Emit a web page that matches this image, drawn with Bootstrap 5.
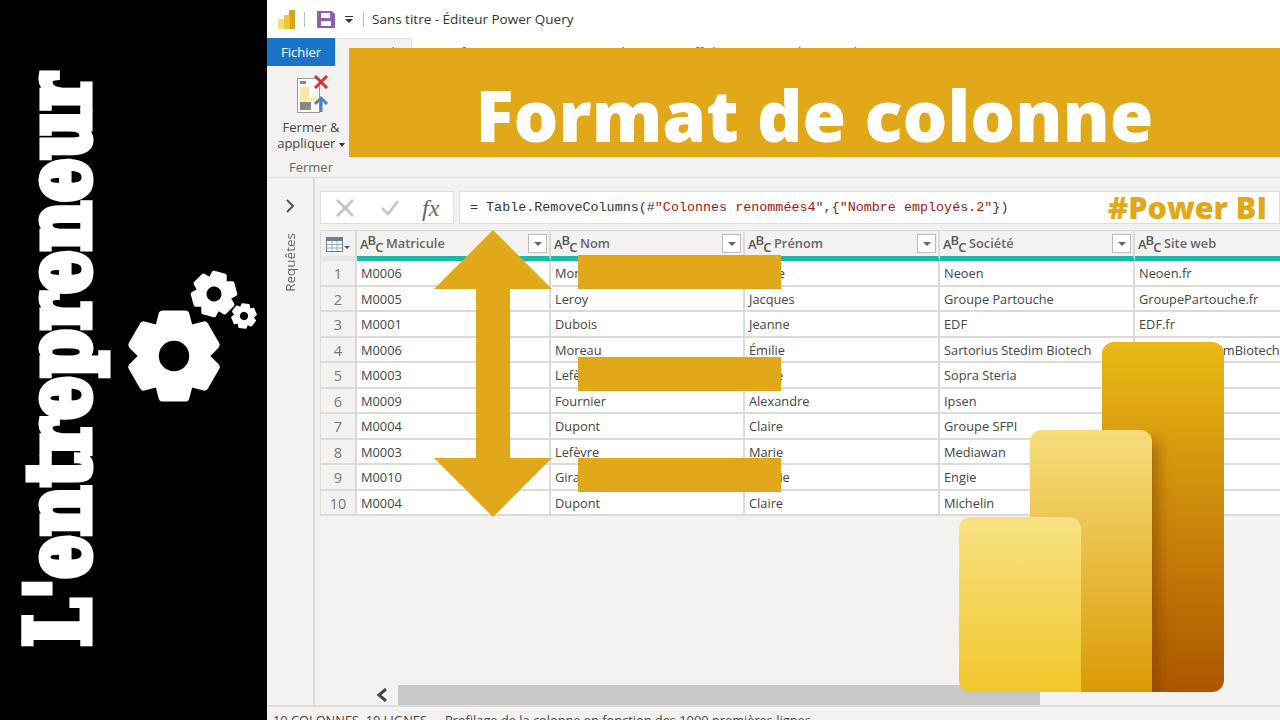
<!DOCTYPE html>
<html lang="fr">
<head>
<meta charset="UTF-8">
<title>Format de colonne</title>
<link href="https://cdn.jsdelivr.net/npm/bootstrap@5.3.0/dist/css/bootstrap.min.css" rel="stylesheet">
<style>
html, body { height: 720px; overflow: hidden; }
body { font-family: "Open Sans", "Noto Sans", sans-serif; color: #444; background: #000; position: relative; }
.brand-side { width: 267px; height: 720px; background: #000; flex: none; overflow: hidden; }
.brand-name { writing-mode: vertical-rl; transform: rotate(180deg) scaleY(.853); font-family: "DejaVu Serif Condensed", "DejaVu Serif", serif; font-weight: 700; font-size: 88px; line-height: 88px; color: #fff; -webkit-text-stroke: 7px #fff; width: 88px; flex: none; margin: -30px 0 0 14px; height: 780px; text-align: center; white-space: nowrap; }
.brand-gears { width: 135px; height: 145px; margin-left: 25px; margin-top: 263px; flex: none; }
.pq-app { width: 1013px; height: 720px; background: #f3f2f1; overflow: hidden; }
.pq-title { height: 38px; background: #fff; font-size: 13.5px; color: #333; flex: none; }
.pq-logo { margin: 0 8px 0 11px; }
.pq-sep { width: 1px; height: 15px; background: #bbb; }
.pq-qat { margin: 0 10px; }
.pq-tabs { height: 28px; background: #fff; font-size: 13px; color: #555; flex: none; }
.pq-file { width: 68px; background: #1b74c5; color: #fff; padding-top: 2px; }
.pq-tab-on { width: 77px; background: #f3f2f1; border: 1px solid #ddd; border-bottom: 0; }
.pq-tab { padding: 0 15px; line-height: 28px; }
.pq-ribbon { height: 112px; border-bottom: 1px solid #ddd; font-size: 13px; line-height: 16px; color: #444; flex: none; }
.pq-close { width: 88px; }
.pq-close svg { margin-left: 6px; }
.pq-close-label { margin-top: 5px; }
.pq-group { color: #666; margin-top: 8px; }
.pq-caret { display: inline-block; border: 3.5px solid transparent; border-top: 4px solid #333; border-bottom: 0; vertical-align: middle; }
.pq-panel { width: 48px; flex: none; border-right: 2px solid #dcdbda; color: #666; padding-top: 21px; }
.pq-vert { writing-mode: vertical-rl; transform: rotate(180deg); font-size: 13.5px; margin-top: 20px; }
.pq-body { min-width: 0; padding: 13px 0 0 5px; }
.pq-formula-row { gap: 5px; }
.pq-box { height: 33px; background: #fff; border: 1px solid #dedddc; }
.pq-btns { width: 134px; flex: none; padding-left: 15px; }
.pq-btns svg:first-child { margin-right: 27px; }
.pq-btns svg:nth-child(2) { margin-right: 23px; }
.pq-fx { font-family: "Liberation Serif", serif; font-style: italic; font-size: 24px; line-height: 1; color: #666; }
.pq-formula { font-size: 13.4px; color: #333; white-space: nowrap; padding-left: 10px; }
.pq-code { font-family: "Liberation Mono", monospace; padding-top: 2px; }
.pq-str { color: #a31515; }
.pq-hash { font-weight: 800; font-size: 30.5px; color: #e1a91a; line-height: 1; margin-right: 12px; }
.pq-grid { table-layout: fixed; width: 1011px; margin: 6px 0 0; border-collapse: separate; border-spacing: 0; font-size: 12.8px; }
.pq-grid th, .pq-grid td { padding: 2px 4px 0; line-height: 1.2; border: 0 solid #dcdbda; border-width: 0 2px 2px 0; color: #444; vertical-align: middle; white-space: nowrap; overflow: hidden; box-shadow: none; }
.pq-grid th { height: 31px; background: #f3f2f1; border-top-width: 1px; border-bottom: 5px solid #1ab8a6; color: #666; font-weight: 600; padding: 0 2px 0 3px; }
.pq-grid th.pq-corner { border-bottom: 5px solid #e6e5e4; border-left-width: 1px; text-align: center; padding: 0; }
.pq-grid tbody tr:nth-child(odd) td { height: 26px; }
.pq-grid tbody tr:nth-child(even) td { height: 25px; }
.pq-grid td { background: #fff; }
.pq-grid td.pq-num { background: #f3f2f1; border-left-width: 1px; color: #777; font-size: 14.5px; text-align: center; padding: 2px 0 0; }
.pq-abc { font-size: 13px; font-weight: 600; color: #555; width: 22px; flex: none; letter-spacing: -1px; line-height: 1; }
.pq-up { vertical-align: 4px; }
.pq-down { vertical-align: -3px; }
.pq-head { padding-left: 4px; }
.pq-filter { width: 19px; height: 19px; background: #fff; border: 1px solid #bbb; flex: none; }
.pq-filter i { border: 4px solid transparent; border-top: 4px solid #666; border-bottom: 0; }
.pq-scroll { height: 20px; flex: none; }
.pq-back { width: 78px; padding-right: 10px; }
.pq-thumb { width: 642px; background: #c8c8c8; }
.pq-status { height: 15px; flex: none; border-top: 2px solid #dedddc; font-size: 12.8px; line-height: 18px; padding: 4px 0 0 6px; gap: 18px; color: #444; white-space: nowrap; }
.over-banner { left: 349px; top: 48px; width: 931px; height: 109px; padding-top: 26px; background: #e1a91a; color: #fff; font-weight: 800; font-size: 70.600px; line-height: 1; }
.over-art { left: 0; top: 0; width: 1280px; height: 720px; pointer-events: none; }
</style>
</head>
<body>
<div class="d-flex">
  <aside class="brand-side d-flex">
    <div class="brand-name">L'entrepreneur</div>
    <svg class="brand-gears" viewBox="0 0 135 145" aria-hidden="true">
      <defs>
        <g id="gear">
          <circle r="37" fill="#fff"/>
          <path id="tooth" fill="#fff" d="M-12-48h24q3 0 4 3l5 19h-42l5-19q1-3 4-3z"/>
          <use href="#tooth" transform="rotate(60)"/>
          <use href="#tooth" transform="rotate(120)"/>
          <use href="#tooth" transform="rotate(180)"/>
          <use href="#tooth" transform="rotate(240)"/>
          <use href="#tooth" transform="rotate(300)"/>
          <circle r="16" fill="#000"/>
        </g>
      </defs>
      <use href="#gear" transform="translate(47 93) scale(.95)"/>
      <use href="#gear" transform="translate(87 31) rotate(15) scale(.47)"/>
      <use href="#gear" transform="translate(117 53) rotate(8) scale(.26)"/>
    </svg>
  </aside>
  <main class="pq-app d-flex flex-column flex-grow-1">
    <div class="pq-title d-flex align-items-center">
      <svg class="pq-logo" width="18" height="19" viewBox="0 0 18 19" aria-hidden="true">
        <rect x="11" y="0" width="6" height="19" rx="1" fill="#d9a50f"/>
        <rect x="6" y="5" width="6" height="14" rx="1" fill="#ecc436"/>
        <rect x="0" y="9" width="6" height="10" rx="1" fill="#f5dc78"/>
      </svg>
      <span class="pq-sep me-1"></span>
      <svg width="18" height="17" viewBox="0 0 18 17" class="ms-2" aria-hidden="true">
        <path fill="#8e5db5" d="M0 0h15l3 3v14H0zM4 2v5h9V2zM4 10v5h10v-5z"/>
      </svg>
      <svg class="pq-qat" width="8" height="9" viewBox="0 0 8 9" aria-hidden="true"><path fill="#333" d="M0 1h8v1H0zM0 4h8L4 8z"/></svg>
      <span class="pq-sep me-2"></span>
      <span>Sans titre - Éditeur Power Query</span>
    </div>
    <div class="pq-tabs d-flex">
      <div class="pq-file d-flex align-items-center justify-content-center">Fichier</div>
      <div class="pq-tab-on d-flex align-items-center justify-content-center">Accueil</div>
      <div class="pq-tab">Transformer</div>
      <div class="pq-tab">Ajouter une colonne</div>
      <div class="pq-tab">Affichage</div>
      <div class="pq-tab">Outils</div>
      <div class="pq-tab">Aide</div>
    </div>
    <div class="pq-ribbon d-flex">
      <div class="pq-close d-flex flex-column align-items-center text-center pt-2">
        <svg width="34" height="40" viewBox="0 0 34 40" aria-hidden="true">
          <rect x=".5" y="4.500" width="22" height="34" fill="#fff" stroke="#999"/>
          <path fill="#fbe8a6" d="M3 13h9v12l8-4v6H3z"/>
          <rect x="3" y="7" width="6" height="3" fill="#888"/>
          <rect x="3" y="28" width="11" height="8" fill="#888"/>
          <path stroke="#d13438" stroke-width="3" fill="none" d="M18 2l12 12M30 2L18 14"/>
          <path stroke="#4f86b8" stroke-width="3" fill="none" d="M24 38V24M18 30l6-6 6 6"/>
        </svg>
        <div class="pq-close-label">Fermer &amp;<br>appliquer <i class="pq-caret"></i></div>
        <div class="pq-group">Fermer</div>
      </div>
    </div>
    <div class="d-flex flex-grow-1" style="min-height:0">
      <div class="pq-panel d-flex flex-column align-items-center">
        <svg width="10" height="14" viewBox="0 0 10 14" aria-hidden="true"><path d="M2 1l6 6-6 6" fill="none" stroke="#555" stroke-width="2"/></svg>
        <div class="pq-vert">Requêtes</div>
      </div>
      <div class="pq-body flex-grow-1 d-flex flex-column">
        <div class="d-flex pq-formula-row">
          <div class="pq-box pq-btns d-flex align-items-center">
            <svg width="18" height="18" viewBox="0 0 18 18" aria-hidden="true"><path d="M1 1l16 16M17 1L1 17" stroke="#c4c4c4" stroke-width="2.500"/></svg>
            <svg width="18" height="16" viewBox="0 0 18 16" aria-hidden="true"><path d="M1 8l6 6L17 1" fill="none" stroke="#c4c4c4" stroke-width="2.500"/></svg>
            <span class="pq-fx">fx</span>
          </div>
          <div class="pq-box pq-formula flex-grow-1 d-flex align-items-center justify-content-between">
            <span class="pq-code">= Table.RemoveColumns(#<span class="pq-str">"Colonnes renommées4"</span>,{<span class="pq-str">"Nombre employés.2"</span>})</span>
            <span class="pq-hash">#Power BI</span>
          </div>
        </div>
        <table class="table pq-grid">
          <colgroup><col style="width:37px"><col style="width:194px"><col style="width:194px"><col style="width:195px"><col style="width:195px"><col style="width:196px"></colgroup>
          <thead>
            <tr>
              <th class="pq-corner">
                <svg width="24" height="15" viewBox="0 0 24 15" aria-hidden="true"><rect x=".5" y=".5" width="16" height="14" fill="#fff" stroke="#6a7f96"/><path fill="#6a7f96" d="M0 0h17v4H0z"/><path stroke="#9aa9b8" d="M6 4v10M11 4v10M1 7.500h15M1 11h15"/><path fill="#555" d="M18 9h6l-3 3z"/></svg>
              </th>
              <th><div class="d-flex align-items-center"><span class="pq-abc">A<span class="pq-up">B</span><span class="pq-down">C</span></span><span class="flex-grow-1 pq-head">Matricule</span><span class="pq-filter d-flex align-items-center justify-content-center"><i></i></span></div></th>
              <th><div class="d-flex align-items-center"><span class="pq-abc">A<span class="pq-up">B</span><span class="pq-down">C</span></span><span class="flex-grow-1 pq-head">Nom</span><span class="pq-filter d-flex align-items-center justify-content-center"><i></i></span></div></th>
              <th><div class="d-flex align-items-center"><span class="pq-abc">A<span class="pq-up">B</span><span class="pq-down">C</span></span><span class="flex-grow-1 pq-head">Prénom</span><span class="pq-filter d-flex align-items-center justify-content-center"><i></i></span></div></th>
              <th><div class="d-flex align-items-center"><span class="pq-abc">A<span class="pq-up">B</span><span class="pq-down">C</span></span><span class="flex-grow-1 pq-head">Société</span><span class="pq-filter d-flex align-items-center justify-content-center"><i></i></span></div></th>
              <th><div class="d-flex align-items-center"><span class="pq-abc">A<span class="pq-up">B</span><span class="pq-down">C</span></span><span class="flex-grow-1 pq-head">Site web</span></div></th>
            </tr>
          </thead>
          <tbody>
            <tr><td class="pq-num">1</td><td>M0006</td><td>Moreau</td><td>Émilie</td><td>Neoen</td><td>Neoen.fr</td></tr>
            <tr><td class="pq-num">2</td><td>M0005</td><td>Leroy</td><td>Jacques</td><td>Groupe Partouche</td><td>GroupePartouche.fr</td></tr>
            <tr><td class="pq-num">3</td><td>M0001</td><td>Dubois</td><td>Jeanne</td><td>EDF</td><td>EDF.fr</td></tr>
            <tr><td class="pq-num">4</td><td>M0006</td><td>Moreau</td><td>Émilie</td><td>Sartorius Stedim Biotech</td><td>SartoriusStedimBiotech.fr</td></tr>
            <tr><td class="pq-num">5</td><td>M0003</td><td>Lefèvre</td><td>Marie</td><td>Sopra Steria</td><td>SopraSteria.fr</td></tr>
            <tr><td class="pq-num">6</td><td>M0009</td><td>Fournier</td><td>Alexandre</td><td>Ipsen</td><td>Ipsen.fr</td></tr>
            <tr><td class="pq-num">7</td><td>M0004</td><td>Dupont</td><td>Claire</td><td>Groupe SFPI</td><td>GroupeSFPI.fr</td></tr>
            <tr><td class="pq-num">8</td><td>M0003</td><td>Lefèvre</td><td>Marie</td><td>Mediawan</td><td>Mediawan.fr</td></tr>
            <tr><td class="pq-num">9</td><td>M0010</td><td>Girard</td><td>Sophie</td><td>Engie</td><td>Engie.fr</td></tr>
            <tr><td class="pq-num">10</td><td>M0004</td><td>Dupont</td><td>Claire</td><td>Michelin</td><td>Michelin.fr</td></tr>
          </tbody>
        </table>
        <div class="pq-scroll d-flex mt-auto">
          <div class="pq-back d-flex align-items-center justify-content-end">
            <svg width="12" height="14" viewBox="0 0 12 14" aria-hidden="true"><path d="M10 1L3 7l7 6" fill="none" stroke="#444" stroke-width="3"/></svg>
          </div>
          <div class="pq-thumb"></div>
        </div>
      </div>
    </div>
    <div class="pq-status d-flex"><span>10 COLONNES, 10 LIGNES</span><span>Profilage de la colonne en fonction des 1000 premières lignes</span></div>
  </main>
</div>

<div class="over-banner position-absolute d-flex align-items-center justify-content-center">Format de colonne</div>
<svg class="over-art position-absolute" viewBox="0 0 1280 720" aria-hidden="true">
  <defs>
    <linearGradient id="barLeft" x1="0" y1="0" x2="0" y2="1"><stop offset="0" stop-color="#f7e184"/><stop offset="1" stop-color="#f2c72b"/></linearGradient>
    <linearGradient id="barMid" x1="0" y1="0" x2="0" y2="1"><stop offset="0" stop-color="#f6de7c"/><stop offset=".5" stop-color="#e8bc42"/><stop offset="1" stop-color="#da9a04"/></linearGradient>
    <linearGradient id="barRight" x1="0" y1="0" x2="0" y2="1"><stop offset="0" stop-color="#e9b914"/><stop offset="1" stop-color="#ad5600"/></linearGradient>
    <filter id="soft" x="-100%" y="-20%" width="300%" height="140%"><feGaussianBlur stdDeviation="8"/></filter>
    <clipPath id="rightClip"><rect x="1152" y="342" width="72" height="350"/></clipPath>
  </defs>
  <path fill="#e1a91a" d="M493 230l59 59h-42v169h42l-59 59-59-59h42V289h-42z"/>
  <rect x="578" y="255" width="203" height="34" fill="#e1a91a"/>
  <rect x="578" y="357" width="203" height="34" fill="#e1a91a"/>
  <rect x="578" y="458" width="203" height="34" fill="#e1a91a"/>
  <rect x="1102" y="342" width="122" height="350" rx="12" fill="url(#barRight)"/>
  <g clip-path="url(#rightClip)"><rect x="1140" y="440" width="18" height="270" fill="#7a3c00" fill-opacity=".55" filter="url(#soft)"/></g>
  <path fill="url(#barMid)" d="M1042 430h98a12 12 0 0 1 12 12v250h-122V442a12 12 0 0 1 12-12z"/>
  <path fill="url(#barLeft)" d="M971 517h98a12 12 0 0 1 12 12v163H971a12 12 0 0 1-12-12V529a12 12 0 0 1 12-12z"/>
</svg>
<script src="https://cdn.jsdelivr.net/npm/bootstrap@5.3.0/dist/js/bootstrap.bundle.min.js"></script>
</body>
</html>
